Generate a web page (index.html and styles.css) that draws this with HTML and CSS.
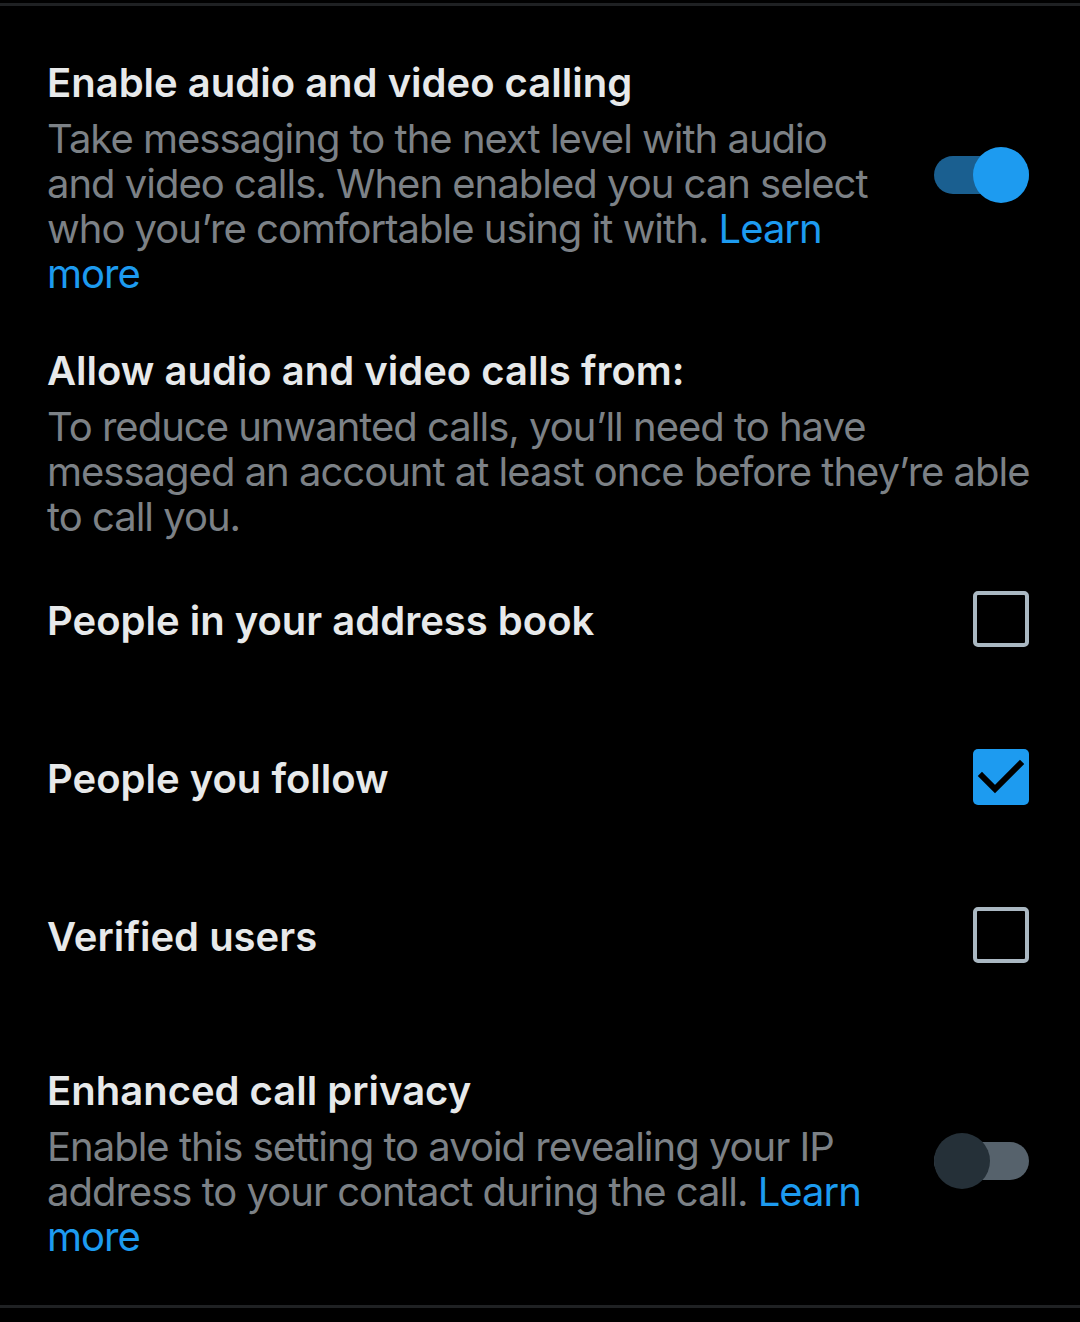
FILE: index.html
```html
<!DOCTYPE html>
<html lang="en">
<head>
  <meta charset="UTF-8" />
  <meta name="viewport" content="width=device-width, initial-scale=1.0"/>
  <title>Audio and video calling</title>
  <link rel="stylesheet" href="styles.css">
</head>
<body>

  <div class="divider top"></div>

  <div class="setting first">
    <div class="setting-text">
      <div class="title">Enable audio and video calling</div>
      <div class="desc">Take messaging to the next level with audio and video calls. When enabled you can select who you’re comfortable using it with. <a href="#">Learn more</a></div>
    </div>
    <div class="toggle on" onclick="flip(this)"><span class="track"></span><span class="knob"></span></div>
  </div>

  <div class="setting group">
    <div class="setting-text">
      <div class="title">Allow audio and video calls from:</div>
      <div class="desc">To reduce unwanted calls, you’ll need to have messaged an account at least once before they’re able to call you.</div>
    </div>
  </div>

  <div class="check-row" onclick="tick(this)">
    <span class="label">People in your address book</span>
    <span class="checkbox"></span>
  </div>
  <div class="check-row" onclick="tick(this)">
    <span class="label">People you follow</span>
    <span class="checkbox checked">
      <svg viewBox="0 0 56 56" width="56" height="56"><path d="M9 27 L22 40 L47 15" fill="none" stroke="#000" stroke-width="6" stroke-linecap="square"/></svg>
    </span>
  </div>
  <div class="check-row" onclick="tick(this)">
    <span class="label">Verified users</span>
    <span class="checkbox"></span>
  </div>

  <div class="setting last">
    <div class="setting-text">
      <div class="title">Enhanced call privacy</div>
      <div class="desc">Enable this setting to avoid revealing your IP address to your contact during the call. <a href="#">Learn more</a></div>
    </div>
    <div class="toggle" onclick="flip(this)"><span class="track"></span><span class="knob"></span></div>
  </div>

  <div class="divider"></div>

  <script>
    function flip(el) {
      el.classList.toggle("on");
    }

    function tick(row) {
      const box = row.querySelector(".checkbox");
      box.classList.toggle("checked");
      if (box.classList.contains("checked") && !box.innerHTML.trim()) {
        box.innerHTML = '<svg viewBox="0 0 56 56" width="56" height="56"><path d="M9 27 L22 40 L47 15" fill="none" stroke="#000" stroke-width="6" stroke-linecap="square"/></svg>';
      } else if (!box.classList.contains("checked")) {
        box.innerHTML = "";
      }
    }
  </script>
</body>
</html>
```

FILE: styles.css
```css
body {
  margin: 0;
  background: #000;
  color: #e7e9ea;
  font-family: Inter, "Liberation Sans", sans-serif;
  font-size: 40px;
  line-height: 45px;
}

.divider {
  height: 3px;
  background: #1f2123;
}

.divider.top {
  margin-top: 3px;
}

.setting {
  display: flex;
  align-items: center;
  gap: 40px;
  padding: 26px 51px 26px 47px;
}

.setting.first {
  padding-top: 54px;
}

.setting.group {
  padding-right: 36px;
  padding-bottom: 2px;
}

.setting.last {
  padding-top: 53px;
  padding-bottom: 46px;
}

.setting-text {
  flex: 1;
}

.title {
  font-weight: 600;
  margin-bottom: 11px;
}

.desc {
  color: #7c8186;
  letter-spacing: -1px;
}

.desc a {
  color: #1d9bf0;
  text-decoration: none;
}

.toggle {
  position: relative;
  width: 95px;
  height: 56px;
  flex-shrink: 0;
  margin-top: -6px;
  cursor: pointer;
}

.toggle .track {
  position: absolute;
  left: 0;
  right: 0;
  top: 9px;
  height: 38px;
  border-radius: 19px;
  background: #56626c;
}

.toggle .knob {
  position: absolute;
  left: 0;
  top: 0;
  width: 56px;
  height: 56px;
  border-radius: 50%;
  background: #253038;
}

.toggle.on .track {
  background: #1a5f90;
}

.toggle.on .knob {
  left: auto;
  right: 0;
  background: #1d9bf0;
}

.check-row {
  display: flex;
  align-items: center;
  justify-content: space-between;
  height: 158px;
  padding: 0 51px 0 47px;
  font-weight: 600;
  cursor: pointer;
}

.checkbox {
  box-sizing: border-box;
  width: 56px;
  height: 56px;
  border: 4px solid #aab8c2;
  border-radius: 5px;
  margin-top: -2px;
}

.checkbox.checked {
  border: none;
  background: #1d9bf0;
}

.checkbox svg {
  display: block;
}
```
